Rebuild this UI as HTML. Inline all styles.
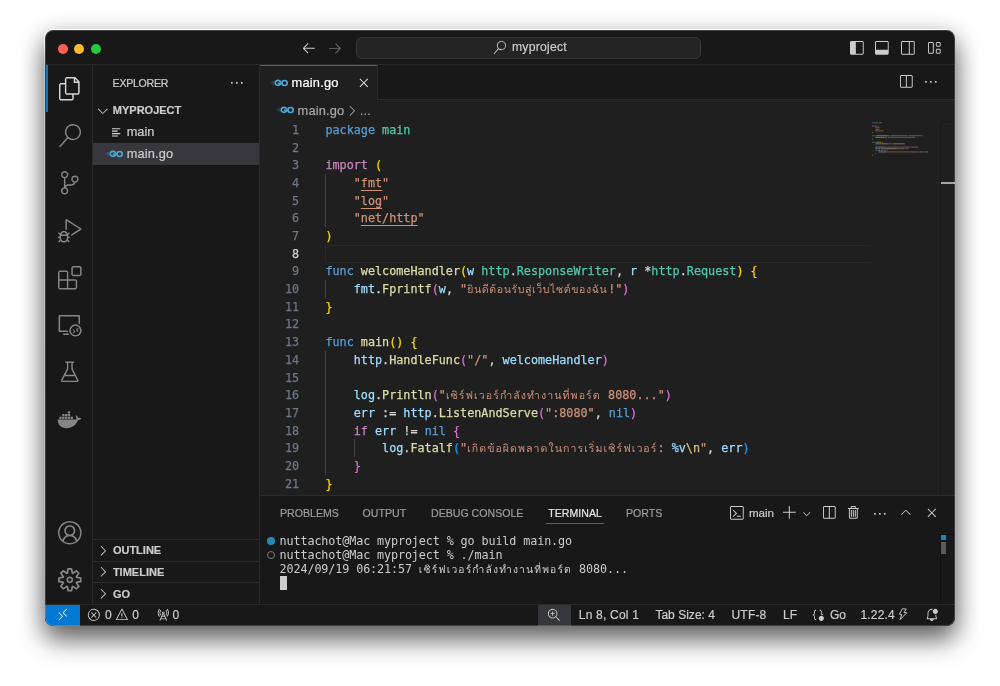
<!DOCTYPE html>
<html lang="th"><head><meta charset="utf-8"><title>main.go — myproject</title>
<style>
html,body{margin:0;padding:0;background:#fff;}
body{width:1000px;height:686px;position:relative;overflow:hidden;font-family:"Liberation Sans","Noto Sans Thai",sans-serif;}
.abs,.ic,.t{position:absolute;}
.ic{display:block;overflow:visible}
.t{white-space:pre;line-height:20px;height:20px;-webkit-text-stroke:.2px}
.m{font-family:"DejaVu Sans Mono","Liberation Mono","Loma","Noto Sans Thai Looped",monospace;}
#win{left:45px;top:30.2px;width:909.7px;height:595.4px;background:#181818;border-radius:8.5px;
 box-shadow:0 14px 26px rgba(0,0,0,.55),0 4px 24px rgba(0,0,0,.22);}
#inner{left:45.5px;top:30.2px;width:909px;height:595.4px;border-radius:8.5px;overflow:hidden;}
.ln{position:absolute;left:0;width:39px;text-align:right;color:#6e7681;}
.code{position:absolute;left:0;top:0;}
.row{position:absolute;left:0;height:17.68px;line-height:17.68px;white-space:pre;font-size:11.78px;-webkit-text-stroke:.25px}
.k{color:#569cd6}.c{color:#c586c0}.ty{color:#4ec9b0}.f{color:#dcdcaa}.v{color:#9cdcfe}.s{color:#ce9178}.p{color:#d4d4d4}
.b1{color:#ffd700}.b2{color:#da70d6}.b3{color:#179fff}.e{color:#d7ba7d}.u{text-decoration:underline;text-underline-offset:3px;text-decoration-thickness:1px}
.th{display:inline-block;white-space:nowrap;overflow:visible;vertical-align:baseline;font-family:"Loma","Noto Sans Thai Looped","Liberation Mono",monospace;line-height:1;-webkit-text-stroke:0}
</style></head><body>
<div id="win" class="abs"></div>
<div class="abs" style="left:44.2px;top:29.4px;width:911.3px;height:596.6px;border-radius:9.3px;background:linear-gradient(to bottom,rgba(255,255,255,.95) 0,rgba(215,215,215,.55) 6%,rgba(205,205,205,.5) 80%,rgba(160,160,160,0) 99%)"></div>
<div class="abs" style="left:45px;top:30.2px;width:909.7px;height:595.4px;border-radius:8.5px;background:#181818"></div>
<div id="all" class="abs" style="left:0;top:0;width:1000px;height:686px;will-change:transform">

<div class="abs" style="left:45.5px;top:63.9px;width:909px;height:1px;background:#2b2b2b"></div>
<div class="abs" style="left:58.10px;top:44.00px;width:10px;height:10px;border-radius:50%;background:#ff5f57"></div>
<div class="abs" style="left:74.45px;top:44.00px;width:10px;height:10px;border-radius:50%;background:#febc2e"></div>
<div class="abs" style="left:90.85px;top:44.00px;width:10px;height:10px;border-radius:50%;background:#28c840"></div>
<svg class="ic" style="left:301.05px;top:40.15px;width:15.70px;height:15.70px;" viewBox="0 0 16 16"><path fill="#ccc" d="M6.99 3.09 2.03 8.11V8.8L6.99 13.81L7.73 13.07L3.57 8.96H14.03V7.95H3.57L7.73 3.79Z"/></svg>
<svg class="ic" style="left:326.75px;top:40.15px;width:15.70px;height:15.70px;" viewBox="0 0 16 16"><path fill="#6f6f6f" d="M9.01 13.87 14.03 8.91V8.16L9.01 3.2L8.27 3.89L12.43 8.05H2.03V9.01H12.43L8.27 13.17Z"/></svg>
<div class="abs" style="left:355.5px;top:36.7px;width:345.8px;height:22.1px;box-sizing:border-box;border:1px solid #383838;border-radius:6px;background:#242424"></div>
<svg class="ic" style="left:492.95px;top:40.85px;width:13.30px;height:13.30px;" viewBox="0 0 16 16"><path fill="#ccc" d="M10.19 0Q8.53 0 7.17 0.88Q5.81 1.76 5.15 3.25Q4.48 4.75 4.72 6.35Q4.96 7.95 6.03 9.12L0.69 15.25L1.44 15.89L6.77 9.81Q8.21 10.93 10 10.99Q11.79 11.04 13.28 10.03Q14.77 9.01 15.36 7.31Q15.95 5.6 15.41 3.87Q14.88 2.13 13.41 1.07Q11.95 0 10.19 0ZM10.19 9.97Q8.96 9.97 7.92 9.39Q6.88 8.8 6.27 7.76Q5.65 6.72 5.65 5.49Q5.65 4.27 6.27 3.23Q6.88 2.19 7.92 1.6Q8.96 1.01 10.19 1.01Q11.41 1.01 12.43 1.6Q13.44 2.19 14.05 3.23Q14.67 4.27 14.67 5.49Q14.67 6.72 14.05 7.76Q13.44 8.8 12.43 9.41Q11.41 10.03 10.19 10.03Z"/></svg>
<div class="t" style="left:511.90px;top:37.37px;font-size:12.2px;color:#ccc;letter-spacing:0.25px;">myproject</div>
<svg class="ic" style="left:848.95px;top:39.85px;width:15.70px;height:15.70px;" viewBox="0 0 16 16"><path fill="#ccc" d="M2.03 1.01 1.01 1.97V13.97L2.03 14.99H14.03L14.99 13.97V1.97L14.03 1.01ZM14.03 13.97H6.99V1.97H14.03Z"/></svg>
<svg class="ic" style="left:874.45px;top:39.85px;width:15.70px;height:15.70px;" viewBox="0 0 16 16"><path fill="#ccc" d="M2.03 1.01 1.01 1.97V13.97L2.03 14.99H14.03L14.99 13.97V1.97L14.03 1.01ZM2.03 9.97V1.97H14.03V9.97Z"/></svg>
<svg class="ic" style="left:899.95px;top:39.85px;width:15.70px;height:15.70px;" viewBox="0 0 16 16"><path fill="#ccc" d="M2.03 1.01 1.01 2.03V14.03L2.03 14.99H14.03L14.99 14.03V2.03L14.03 1.01ZM2.03 14.03V2.03H9.01V14.03ZM10.03 14.03V2.03H14.03V14.03Z"/></svg>
<svg class="ic" style="left:925.90px;top:39.85px;width:15.70px;height:15.70px;" viewBox="0 0 16 16"><path fill="#ccc" d="M2.99 1.97 2.03 2.99V13.01L2.99 13.97H6.99L8 13.01V2.99L6.99 1.97ZM2.99 13.01V2.99H6.99V13.01ZM10.03 2.99 10.99 1.97H14.03L14.99 2.99V5.97L14.03 6.99H10.99L10.03 5.97ZM10.99 2.99V5.97H14.03V2.99ZM10.03 9.97 10.99 9.01H14.03L14.99 9.97V13.01L14.03 13.97H10.99L10.03 13.01ZM10.99 9.97V13.01H14.03V9.97Z"/></svg>
<div class="abs" style="left:92px;top:64.7px;width:1px;height:539.8px;background:#2b2b2b"></div>
<div class="abs" style="left:45.5px;top:65.4px;width:2px;height:47.1px;background:#0078d4"></div>
<svg class="ic" style="left:57.70px;top:77.20px;width:23.60px;height:23.60px;" viewBox="0 0 16 16"><path fill="#d7d7d7" d="M11.68 0H5.65L4.69 1.01V4H1.65L0.69 5.01V15.04L1.65 16H9.71L10.67 15.04V12H13.81L14.67 11.04V2.99ZM11.68 1.39 13.28 2.99H11.68ZM9.65 14.99H1.65V5.01H4.69V11.04L5.65 12H9.65ZM13.65 10.99H5.65V1.01H10.67V4H13.65Z"/></svg>
<svg class="ic" style="left:57.70px;top:124.33px;width:23.60px;height:23.60px;" viewBox="0 0 16 16"><path fill="#868686" d="M10.19 0Q8.53 0 7.17 0.88Q5.81 1.76 5.15 3.25Q4.48 4.75 4.72 6.35Q4.96 7.95 6.03 9.12L0.69 15.25L1.44 15.89L6.77 9.81Q8.21 10.93 10 10.99Q11.79 11.04 13.28 10.03Q14.77 9.01 15.36 7.31Q15.95 5.6 15.41 3.87Q14.88 2.13 13.41 1.07Q11.95 0 10.19 0ZM10.19 9.97Q8.96 9.97 7.92 9.39Q6.88 8.8 6.27 7.76Q5.65 6.72 5.65 5.49Q5.65 4.27 6.27 3.23Q6.88 2.19 7.92 1.6Q8.96 1.01 10.19 1.01Q11.41 1.01 12.43 1.6Q13.44 2.19 14.05 3.23Q14.67 4.27 14.67 5.49Q14.67 6.72 14.05 7.76Q13.44 8.8 12.43 9.41Q11.41 10.03 10.19 10.03Z"/></svg>
<svg class="ic" style="left:57.70px;top:171.46px;width:23.60px;height:23.60px;" viewBox="0 0 16 16"><path fill="#868686" d="M14.03 5.49Q14.03 4.8 13.65 4.19Q13.28 3.57 12.64 3.25Q12 2.93 11.31 2.99Q10.61 3.04 10.03 3.47Q9.44 3.89 9.2 4.56Q8.96 5.23 9.07 5.92Q9.17 6.61 9.65 7.12Q10.13 7.63 10.83 7.84Q10.56 8.37 10.08 8.67Q9.6 8.96 9.01 8.96H7.04Q5.87 8.96 5.01 9.76V4.91Q5.97 4.75 6.53 3.97Q7.09 3.2 7.01 2.24Q6.93 1.28 6.21 0.64Q5.49 0 4.53 0Q3.57 0 2.85 0.64Q2.13 1.28 2.05 2.24Q1.97 3.2 2.53 3.97Q3.09 4.75 4.05 4.91V10.99Q3.09 11.2 2.51 11.95Q1.92 12.69 2 13.65Q2.08 14.61 2.75 15.28Q3.41 15.95 4.37 16Q5.33 16.05 6.08 15.47Q6.83 14.88 6.99 13.92Q7.15 12.96 6.67 12.16Q6.19 11.36 5.23 11.09Q5.49 10.56 5.97 10.27Q6.45 9.97 7.04 9.97H9.01Q9.97 9.97 10.75 9.41Q11.52 8.85 11.84 7.95Q12.75 7.84 13.39 7.12Q14.03 6.4 14.03 5.49ZM3.04 2.51Q3.04 1.87 3.47 1.44Q3.89 1.01 4.53 1.01Q5.17 1.01 5.6 1.44Q6.03 1.87 6.03 2.48Q6.03 3.09 5.6 3.55Q5.17 4 4.53 4Q3.89 4 3.47 3.55Q3.04 3.09 3.04 2.51ZM6.03 13.44Q6.03 14.08 5.6 14.51Q5.17 14.93 4.53 14.93Q3.89 14.93 3.47 14.51Q3.04 14.08 3.04 13.47Q3.04 12.85 3.47 12.4Q3.89 11.95 4.53 11.95Q5.17 11.95 5.6 12.4Q6.03 12.85 6.03 13.44ZM11.52 6.99Q10.88 6.99 10.45 6.53Q10.03 6.08 10.03 5.47Q10.03 4.85 10.45 4.43Q10.88 4 11.49 4Q12.11 4 12.56 4.43Q13.01 4.85 13.01 5.47Q13.01 6.08 12.56 6.53Q12.11 6.99 11.52 6.99Z"/></svg>
<svg class="ic" style="left:57.70px;top:218.59px;width:23.60px;height:23.60px;" viewBox="0 0 16 16"><path fill="#868686" d="M7.31 9.01 6.4 9.87Q6.19 9.07 5.52 8.53Q4.85 8 4 8Q3.15 8 2.48 8.53Q1.81 9.07 1.6 9.87L0.69 9.01L0 9.71L1.17 10.83L1.01 10.99V12H0V13.01H1.01V13.07Q1.07 13.55 1.28 14.03L0 15.31L0.69 16L1.81 14.88Q2.19 15.41 2.77 15.71Q3.36 16 4 16Q4.64 16 5.23 15.71Q5.81 15.41 6.19 14.88L7.31 16L8 15.31L6.72 13.97Q6.93 13.55 6.99 13.01V12.96H8V12H6.99V10.99L6.88 10.83L8 9.71ZM4 9.01Q4.64 9.01 5.07 9.44Q5.49 9.87 5.49 10.51H2.51Q2.51 9.87 2.93 9.44Q3.36 9.01 4 9.01ZM6.03 13.01Q5.92 13.81 5.36 14.37Q4.8 14.93 4 14.99Q3.2 14.93 2.64 14.37Q2.08 13.81 2.03 13.01V11.52H6.03ZM15.84 6.4V7.25L9.01 11.57V10.4L14.67 6.83L6.03 1.33V7.63Q5.55 7.31 5.01 7.15V0.43L5.76 0Z"/></svg>
<svg class="ic" style="left:57.70px;top:265.72px;width:23.60px;height:23.60px;" viewBox="0 0 16 16"><path fill="#868686" d="M9.01 1.01 10.03 0H14.99L16 1.01V5.97L14.99 6.99H10.03L9.01 5.97ZM10.03 1.01V5.97H14.99V1.01ZM0 9.97V4L1.01 2.99H6.03L6.99 4V9.01H12L13.01 9.97V14.99L12 16H1.01L0 14.99ZM6.03 9.01V4H1.01V9.01ZM6.03 9.97H1.01V14.99H6.03ZM6.99 14.99H12V9.97H6.99Z"/></svg>
<svg class="ic" style="left:57.70px;top:312.85px;width:23.60px;height:23.60px;" viewBox="0 0 16 16"><path fill="#868686" d="M0.91 1.44H14.45L14.93 1.92V7.68Q14.45 7.31 13.92 7.04V2.45H1.44V11.84H6.61Q6.61 13.55 7.68 14.93H3.52V13.92H6.61V12.85H0.91L0.37 12.37V1.92ZM11.84 7.68Q10.72 7.68 9.76 8.24Q8.8 8.8 8.24 9.76Q7.68 10.72 7.68 11.84Q7.68 12.96 8.24 13.92Q8.8 14.88 9.76 15.44Q10.72 16 11.84 16Q12.96 16 13.92 15.44Q14.88 14.88 15.44 13.92Q16 12.96 16 11.84Q16 10.72 15.44 9.76Q14.88 8.8 13.92 8.24Q12.96 7.68 11.84 7.68ZM11.84 14.93Q10.99 14.93 10.27 14.53Q9.55 14.13 9.12 13.41Q8.69 12.69 8.69 11.84Q8.69 10.99 9.12 10.27Q9.55 9.55 10.27 9.12Q10.99 8.69 11.84 8.69Q12.69 8.69 13.41 9.12Q14.13 9.55 14.53 10.27Q14.93 10.99 14.93 11.84Q14.93 12.69 14.53 13.41Q14.13 14.13 13.41 14.53Q12.69 14.93 11.84 14.93ZM13.55 12.85 12.16 11.41 13.55 9.97 14.03 10.45 13.01 11.41 14.03 12.43ZM10.03 11.52 10.99 12.48 10.03 13.49 10.45 13.92 11.89 12.48 10.45 11.04Z"/></svg>
<svg class="ic" style="left:57.70px;top:359.98px;width:23.60px;height:23.60px;" viewBox="0 0 16 16"><path fill="#868686" d="M13.87 13.55 10.03 6.03V2.03H10.99V1.01H5.01V1.97H6.03V5.97L2.08 13.55Q1.87 14.08 2.16 14.53Q2.45 14.99 2.99 14.99H13.01Q13.55 14.99 13.84 14.53Q14.13 14.08 13.87 13.55ZM6.88 6.4 6.99 6.19V2.03H9.01V6.24L10.93 10.03H5.07ZM2.99 14.03 4.53 10.99H11.47L13.01 14.03Z"/></svg>
<svg class="ic" style="left:57px;top:410.5px;width:25px;height:18.5px" viewBox="0 0 25 18.5"><g fill="#868686">
<path d="M0.6 8.6H19.2C19.6 7.2 19.3 5.9 18.6 4.9L19.3 4.2C20.3 4.9 20.9 5.9 21 6.9C22 6.6 23.2 6.7 24.3 7.3C23.7 8.6 22.4 9.3 20.9 9.3C19.3 13.7 15.6 17.2 9.3 17.2C4.2 17.2 0.9 14.2 0.6 8.6Z"/>
<rect x="2.4" y="5.7" width="2.3" height="2.2"/><rect x="5.2" y="5.7" width="2.3" height="2.2"/><rect x="8" y="5.7" width="2.3" height="2.2"/><rect x="10.8" y="5.7" width="2.3" height="2.2"/><rect x="13.6" y="5.7" width="2.3" height="2.2"/>
<rect x="5.2" y="3" width="2.3" height="2.2"/><rect x="8" y="3" width="2.3" height="2.2"/><rect x="10.8" y="3" width="2.3" height="2.2"/>
<rect x="10.8" y="0.3" width="2.3" height="2.2"/></g></svg>
<svg class="ic" style="left:57.60px;top:521.20px;width:23.60px;height:23.60px;" viewBox="0 0 16 16"><path fill="#868686" d="M16 8Q16 5.81 14.93 3.97Q13.87 2.13 12.03 1.07Q10.19 0 8 0Q5.81 0 3.97 1.07Q2.13 2.13 1.07 3.97Q0 5.81 0 8Q0 9.76 0.75 11.36Q1.49 12.96 2.83 14.08L3.52 14.61Q5.55 16 8 16Q10.45 16 12.48 14.61L13.23 14.08Q14.51 12.96 15.25 11.36Q16 9.76 16 8ZM8 14.99Q5.81 14.99 4 13.71L4.05 13.33Q4.21 12.8 4.48 12.35Q4.75 11.89 5.12 11.52Q5.49 11.15 5.92 10.88Q6.35 10.61 6.91 10.48Q7.47 10.35 8 10.35Q8.8 10.35 9.57 10.64Q10.35 10.93 10.91 11.49Q11.47 12.05 11.79 12.8Q11.95 13.23 12.05 13.71Q10.24 14.99 8 14.99ZM5.55 7.57Q5.33 7.09 5.33 6.56Q5.33 6.03 5.55 5.55Q5.76 5.07 6.11 4.72Q6.45 4.37 6.93 4.13Q7.41 3.89 8 3.89Q8.59 3.89 9.04 4.11Q9.49 4.32 9.87 4.69Q10.24 5.07 10.45 5.55Q10.67 6.03 10.67 6.59Q10.67 7.15 10.45 7.6Q10.24 8.05 9.87 8.43Q9.49 8.8 9.01 9.01Q8 9.44 6.93 9.01Q6.51 8.8 6.13 8.43Q5.76 8.05 5.55 7.57ZM12.96 12.91Q12.96 12.91 12.96 12.85V12.8Q12.75 12.05 12.29 11.41Q11.84 10.77 11.2 10.29Q10.72 9.92 10.13 9.65Q10.4 9.49 10.61 9.28Q10.99 8.91 11.25 8.48Q11.79 7.63 11.73 6.56Q11.79 5.81 11.49 5.12Q11.2 4.43 10.67 3.89Q10.13 3.36 9.44 3.09Q8.75 2.83 7.97 2.83Q7.2 2.83 6.51 3.09Q5.81 3.36 5.31 3.89Q4.8 4.43 4.51 5.12Q4.21 5.81 4.21 6.56Q4.21 7.09 4.37 7.6Q4.53 8.11 4.75 8.48Q4.96 8.85 5.39 9.28Q5.6 9.49 5.87 9.71Q5.33 9.92 4.85 10.29Q4.21 10.77 3.76 11.41Q3.31 12.05 3.04 12.85V12.91Q2.08 11.95 1.55 10.67Q1.01 9.39 1.01 8Q1.01 6.08 1.95 4.48Q2.88 2.88 4.48 1.95Q6.08 1.01 8 1.01Q9.92 1.01 11.52 1.95Q13.12 2.88 14.05 4.48Q14.99 6.08 14.99 8Q14.99 9.39 14.48 10.67Q13.97 11.95 12.96 12.91Z"/></svg>
<svg class="ic" style="left:57.60px;top:567.80px;width:23.60px;height:23.60px;" viewBox="0 0 16 16"><path fill="#868686" d="M13.23 5.81 16 6.4V9.6L13.23 10.19L14.83 12.53L12.53 14.77L10.19 13.23L9.6 16H6.4L5.81 13.23L3.47 14.83L1.23 12.53L2.77 10.19L0 9.6V6.4L2.77 5.81L1.23 3.47L3.47 1.17L5.81 2.77L6.4 0H9.6L10.19 2.77L12.53 1.17L14.83 3.47ZM12.21 9.23 14.88 8.69V7.36L12.21 6.77L11.84 5.92L13.33 3.63L12.43 2.67L10.13 4.21L9.23 3.84L8.69 1.17H7.36L6.83 3.84L5.97 4.21L3.68 2.67L2.72 3.63L4.27 5.92L3.89 6.77L1.23 7.36V8.69L3.89 9.23L4.27 10.08L2.72 12.37L3.68 13.33L5.97 11.79L6.83 12.16L7.36 14.83H8.69L9.23 12.16L10.13 11.79L12.43 13.33L13.33 12.37L11.84 10.08ZM6.72 6.08Q7.31 5.71 8 5.71Q8.96 5.71 9.63 6.37Q10.29 7.04 10.29 8Q10.29 8.8 9.76 9.44Q9.23 10.08 8.43 10.24Q7.63 10.4 6.91 10.03Q6.19 9.65 5.89 8.88Q5.6 8.11 5.81 7.33Q6.03 6.56 6.72 6.08ZM7.36 8.96Q7.68 9.12 8 9.12Q8.48 9.12 8.8 8.8Q9.12 8.48 9.12 8.03Q9.12 7.57 8.88 7.28Q8.64 6.99 8.24 6.91Q7.84 6.83 7.47 7.01Q7.09 7.2 6.93 7.57Q6.77 7.95 6.91 8.35Q7.04 8.75 7.36 8.96Z"/></svg>
<div class="abs" style="left:259px;top:64.7px;width:1px;height:539.8px;background:#2b2b2b"></div>
<div class="t" style="left:112.60px;top:73.33px;font-size:10.6px;color:#ccc;letter-spacing:-0.27px;">EXPLORER</div>
<svg class="ic" style="left:228.65px;top:74.75px;width:15.70px;height:15.70px;" viewBox="0 0 16 16"><path fill="#ccc" d="M4 8Q4 8.43 3.71 8.72Q3.41 9.01 2.99 9.01Q2.56 9.01 2.29 8.72Q2.03 8.43 2.03 8Q2.03 7.57 2.29 7.28Q2.56 6.99 2.99 6.99Q3.41 6.99 3.71 7.28Q4 7.57 4 8ZM9.01 8Q9.01 8.43 8.72 8.72Q8.43 9.01 8 9.01Q7.57 9.01 7.28 8.72Q6.99 8.43 6.99 8Q6.99 7.57 7.28 7.28Q7.57 6.99 8 6.99Q8.43 6.99 8.72 7.28Q9.01 7.57 9.01 8ZM14.03 8Q14.03 8.43 13.73 8.72Q13.44 9.01 13.01 9.01Q12.59 9.01 12.29 8.72Q12 8.43 12 8Q12 7.57 12.29 7.28Q12.59 6.99 13.01 6.99Q13.44 6.99 13.73 7.28Q14.03 7.57 14.03 8Z"/></svg>
<svg class="ic" style="left:95.05px;top:102.85px;width:15.70px;height:15.70px;" viewBox="0 0 16 16"><path fill="#ccc" d="M8 10.08 12.32 5.71 12.96 6.35 8.27 10.99H7.68L2.99 6.35L3.63 5.71Z"/></svg>
<div class="t" style="left:112.80px;top:100.49px;font-size:11px;color:#ccc;font-weight:700;">MYPROJECT</div>
<svg class="ic" style="left:112px;top:127.8px;width:9px;height:9px" viewBox="0 0 9 9"><g stroke="#d4d7d6" stroke-width="1.15"><path d="M0 0.7H8.3M0 3.15H5.6M0 5.6H8.3M0 8H6"/></g></svg>
<div class="t" style="left:126.70px;top:122.06px;font-size:12.8px;color:#ccc;">main</div>
<div class="abs" style="left:92.9px;top:143.2px;width:166.2px;height:21.6px;background:#37373d"></div>
<svg class="ic" style="left:104.90px;top:150.30px;width:18px;height:8px" viewBox="0 0 18 8"><g fill="none" stroke="#4fa9d6" stroke-width="1.6" stroke-linecap="round"><path d="M10.35 2.55A2.75 2.5 0 1 0 10.7 4.3H8.4"/><ellipse cx="14.55" cy="4" rx="2.65" ry="2.5"/></g><g stroke="#4fa9d6" stroke-width="0.5" stroke-linecap="round" opacity=".6"><path d="M2.2 2.8H4.4M0.8 3.9H4M2.6 5H4.2"/></g></svg>
<div class="t" style="left:126.70px;top:143.66px;font-size:12.8px;color:#ccc;letter-spacing:0.17px;">main.go</div>
<div class="abs" style="left:93px;top:539.30px;width:166px;height:1px;background:#2b2b2b"></div>
<svg class="ic" style="left:94.85px;top:542.65px;width:15.70px;height:15.70px;" viewBox="0 0 16 16"><path fill="#ccc" d="M10.08 8 5.71 3.68 6.35 3.04 10.99 7.73V8.32L6.35 13.01L5.71 12.37Z"/></svg>
<div class="t" style="left:112.90px;top:540.49px;font-size:11px;color:#ccc;font-weight:700;">OUTLINE</div>
<div class="abs" style="left:93px;top:560.85px;width:166px;height:1px;background:#2b2b2b"></div>
<svg class="ic" style="left:94.85px;top:564.20px;width:15.70px;height:15.70px;" viewBox="0 0 16 16"><path fill="#ccc" d="M10.08 8 5.71 3.68 6.35 3.04 10.99 7.73V8.32L6.35 13.01L5.71 12.37Z"/></svg>
<div class="t" style="left:112.90px;top:562.04px;font-size:11px;color:#ccc;font-weight:700;">TIMELINE</div>
<div class="abs" style="left:93px;top:582.40px;width:166px;height:1px;background:#2b2b2b"></div>
<svg class="ic" style="left:94.85px;top:585.75px;width:15.70px;height:15.70px;" viewBox="0 0 16 16"><path fill="#ccc" d="M10.08 8 5.71 3.68 6.35 3.04 10.99 7.73V8.32L6.35 13.01L5.71 12.37Z"/></svg>
<div class="t" style="left:112.90px;top:583.59px;font-size:11px;color:#ccc;font-weight:700;">GO</div>
<div class="abs" style="left:260px;top:64.7px;width:694.5px;height:431px;background:#1f1f1f"></div>
<div class="abs" style="left:260px;top:64.7px;width:694.5px;height:34.4px;background:#181818"></div>
<div class="abs" style="left:260px;top:98.6px;width:694.5px;height:1px;background:#2b2b2b"></div>
<div class="abs" style="left:260px;top:64.7px;width:117px;height:35px;background:#1f1f1f"></div>
<div class="abs" style="left:260px;top:64.6px;width:117px;height:1px;background:#0078d4"></div>
<div class="abs" style="left:377px;top:64.7px;width:1px;height:34.4px;background:#2b2b2b"></div>
<svg class="ic" style="left:270.30px;top:78.80px;width:18px;height:8px" viewBox="0 0 18 8"><g fill="none" stroke="#4fa9d6" stroke-width="1.6" stroke-linecap="round"><path d="M10.35 2.55A2.75 2.5 0 1 0 10.7 4.3H8.4"/><ellipse cx="14.55" cy="4" rx="2.65" ry="2.5"/></g><g stroke="#4fa9d6" stroke-width="0.5" stroke-linecap="round" opacity=".6"><path d="M2.2 2.8H4.4M0.8 3.9H4M2.6 5H4.2"/></g></svg>
<div class="t" style="left:291.60px;top:72.56px;font-size:12.8px;color:#fff;letter-spacing:0.2px;">main.go</div>
<svg class="ic" style="left:355.85px;top:75.15px;width:15.70px;height:15.70px;" viewBox="0 0 16 16"><path fill="#ddd" d="M8 8.69 11.63 12.37 12.37 11.63 8.69 8 12.37 4.37 11.63 3.63 8 7.31 4.37 3.63 3.63 4.37 7.31 8 3.63 11.63 4.37 12.37Z"/></svg>
<svg class="ic" style="left:898.45px;top:74.05px;width:15.70px;height:15.70px;" viewBox="0 0 16 16"><path fill="#ccc" d="M14.03 1.01H2.99L2.03 1.97V13.01L2.99 13.97H14.03L14.99 13.01V1.97ZM8 13.01H2.99V1.97H8ZM14.03 13.01H9.01V1.97H14.03Z"/></svg>
<svg class="ic" style="left:923.45px;top:74.45px;width:15.70px;height:15.70px;" viewBox="0 0 16 16"><path fill="#ccc" d="M4 8Q4 8.43 3.71 8.72Q3.41 9.01 2.99 9.01Q2.56 9.01 2.29 8.72Q2.03 8.43 2.03 8Q2.03 7.57 2.29 7.28Q2.56 6.99 2.99 6.99Q3.41 6.99 3.71 7.28Q4 7.57 4 8ZM9.01 8Q9.01 8.43 8.72 8.72Q8.43 9.01 8 9.01Q7.57 9.01 7.28 8.72Q6.99 8.43 6.99 8Q6.99 7.57 7.28 7.28Q7.57 6.99 8 6.99Q8.43 6.99 8.72 7.28Q9.01 7.57 9.01 8ZM14.03 8Q14.03 8.43 13.73 8.72Q13.44 9.01 13.01 9.01Q12.59 9.01 12.29 8.72Q12 8.43 12 8Q12 7.57 12.29 7.28Q12.59 6.99 13.01 6.99Q13.44 6.99 13.73 7.28Q14.03 7.57 14.03 8Z"/></svg>
<svg class="ic" style="left:276.10px;top:106.40px;width:18px;height:8px" viewBox="0 0 18 8"><g fill="none" stroke="#4fa9d6" stroke-width="1.6" stroke-linecap="round"><path d="M10.35 2.55A2.75 2.5 0 1 0 10.7 4.3H8.4"/><ellipse cx="14.55" cy="4" rx="2.65" ry="2.5"/></g><g stroke="#4fa9d6" stroke-width="0.5" stroke-linecap="round" opacity=".6"><path d="M2.2 2.8H4.4M0.8 3.9H4M2.6 5H4.2"/></g></svg>
<div class="t" style="left:297.60px;top:100.66px;font-size:12.8px;color:#a9a9a9;letter-spacing:0.15px;">main.go</div>
<svg class="ic" style="left:344.45px;top:102.55px;width:15.70px;height:15.70px;" viewBox="0 0 16 16"><path fill="#a9a9a9" d="M10.08 8 5.71 3.68 6.35 3.04 10.99 7.73V8.32L6.35 13.01L5.71 12.37Z"/></svg>
<div class="t" style="left:359.60px;top:101.18px;font-size:11.6px;color:#a9a9a9;">…</div>
<div class="abs m" style="left:260px;top:121.2px;width:612px;height:374px;overflow:hidden">
<div class="abs" style="left:65.40px;top:123.76px;width:546px;height:17.68px;box-sizing:border-box;border:1.6px solid #292929;border-right:0"></div>
<div class="abs" style="left:65.40px;top:53.04px;width:1px;height:53.04px;background:#404040"></div>
<div class="abs" style="left:65.40px;top:159.12px;width:1px;height:17.68px;background:#404040"></div>
<div class="abs" style="left:65.40px;top:229.84px;width:1px;height:123.76px;background:#404040"></div>
<div class="abs" style="left:93.76px;top:318.24px;width:1px;height:17.68px;background:#404040"></div>
<div class="row" style="top:0.80px;left:0;width:39.2px;text-align:right;color:#6e7681"><span>1</span></div>
<div class="row" style="top:0.80px;left:65.40px"><span><span class="k">package</span> <span class="ty">main</span></span></div>
<div class="row" style="top:18.48px;left:0;width:39.2px;text-align:right;color:#6e7681"><span>2</span></div>
<div class="row" style="top:36.16px;left:0;width:39.2px;text-align:right;color:#6e7681"><span>3</span></div>
<div class="row" style="top:36.16px;left:65.40px"><span><span class="c">import</span> <span class="b1">(</span></span></div>
<div class="row" style="top:53.84px;left:0;width:39.2px;text-align:right;color:#6e7681"><span>4</span></div>
<div class="row" style="top:53.84px;left:65.40px"><span>    <span class="s">"<span class="u">fmt</span>"</span></span></div>
<div class="row" style="top:71.52px;left:0;width:39.2px;text-align:right;color:#6e7681"><span>5</span></div>
<div class="row" style="top:71.52px;left:65.40px"><span>    <span class="s">"<span class="u">log</span>"</span></span></div>
<div class="row" style="top:89.20px;left:0;width:39.2px;text-align:right;color:#6e7681"><span>6</span></div>
<div class="row" style="top:89.20px;left:65.40px"><span>    <span class="s">"<span class="u">net/http</span>"</span></span></div>
<div class="row" style="top:106.88px;left:0;width:39.2px;text-align:right;color:#6e7681"><span>7</span></div>
<div class="row" style="top:106.88px;left:65.40px"><span><span class="b1">)</span></span></div>
<div class="row" style="top:124.56px;left:0;width:39.2px;text-align:right;color:#ccc"><span>8</span></div>
<div class="row" style="top:142.24px;left:0;width:39.2px;text-align:right;color:#6e7681"><span>9</span></div>
<div class="row" style="top:142.24px;left:65.40px"><span><span class="k">func</span> <span class="f">welcomeHandler</span><span class="b1">(</span><span class="v">w</span> <span class="ty">http</span><span class="p">.</span><span class="ty">ResponseWriter</span><span class="p">,</span> <span class="v">r</span> <span class="p">*</span><span class="ty">http</span><span class="p">.</span><span class="ty">Request</span><span class="b1">)</span> <span class="b1">{</span></span></div>
<div class="row" style="top:159.92px;left:0;width:39.2px;text-align:right;color:#6e7681"><span>10</span></div>
<div class="row" style="top:159.92px;left:65.40px"><span>    <span class="v">fmt</span><span class="p">.</span><span class="f">Fprintf</span><span class="b2">(</span><span class="v">w</span><span class="p">,</span> <span class="s">"<span class="th" style="width:141.00px;font-size:10.6px;letter-spacing:0.58px">ยินดีต้อนรับสู่เว็บไซต์ของฉัน</span>!"</span><span class="b2">)</span></span></div>
<div class="row" style="top:177.60px;left:0;width:39.2px;text-align:right;color:#6e7681"><span>11</span></div>
<div class="row" style="top:177.60px;left:65.40px"><span><span class="b1">}</span></span></div>
<div class="row" style="top:195.28px;left:0;width:39.2px;text-align:right;color:#6e7681"><span>12</span></div>
<div class="row" style="top:212.96px;left:0;width:39.2px;text-align:right;color:#6e7681"><span>13</span></div>
<div class="row" style="top:212.96px;left:65.40px"><span><span class="k">func</span> <span class="f">main</span><span class="b1">()</span> <span class="b1">{</span></span></div>
<div class="row" style="top:230.64px;left:0;width:39.2px;text-align:right;color:#6e7681"><span>14</span></div>
<div class="row" style="top:230.64px;left:65.40px"><span>    <span class="v">http</span><span class="p">.</span><span class="f">HandleFunc</span><span class="b2">(</span><span class="s">"/"</span><span class="p">,</span> <span class="v">welcomeHandler</span><span class="b2">)</span></span></div>
<div class="row" style="top:248.32px;left:0;width:39.2px;text-align:right;color:#6e7681"><span>15</span></div>
<div class="row" style="top:266.00px;left:0;width:39.2px;text-align:right;color:#6e7681"><span>16</span></div>
<div class="row" style="top:266.00px;left:65.40px"><span>    <span class="v">log</span><span class="p">.</span><span class="f">Println</span><span class="b2">(</span><span class="s">"<span class="th" style="width:155.10px;font-size:10.6px;letter-spacing:1.05px">เซิร์ฟเวอร์กำลังทำงานที่พอร์ต</span> 8080..."</span><span class="b2">)</span></span></div>
<div class="row" style="top:283.68px;left:0;width:39.2px;text-align:right;color:#6e7681"><span>17</span></div>
<div class="row" style="top:283.68px;left:65.40px"><span>    <span class="v">err</span> <span class="p">:=</span> <span class="v">http</span><span class="p">.</span><span class="f">ListenAndServe</span><span class="b2">(</span><span class="s">":8080"</span><span class="p">,</span> <span class="k">nil</span><span class="b2">)</span></span></div>
<div class="row" style="top:301.36px;left:0;width:39.2px;text-align:right;color:#6e7681"><span>18</span></div>
<div class="row" style="top:301.36px;left:65.40px"><span>    <span class="c">if</span> <span class="v">err</span> <span class="p">!=</span> <span class="k">nil</span> <span class="b2">{</span></span></div>
<div class="row" style="top:319.04px;left:0;width:39.2px;text-align:right;color:#6e7681"><span>19</span></div>
<div class="row" style="top:319.04px;left:65.40px"><span>        <span class="v">log</span><span class="p">.</span><span class="f">Fatalf</span><span class="b3">(</span><span class="s">"<span class="th" style="width:190.35px;font-size:10.6px;letter-spacing:1.04px">เกิดข้อผิดพลาดในการเริ่มเซิร์ฟเวอร์</span>: </span><span class="v">%v</span><span class="e">\n</span><span class="s">"</span><span class="p">,</span> <span class="v">err</span><span class="b3">)</span></span></div>
<div class="row" style="top:336.72px;left:0;width:39.2px;text-align:right;color:#6e7681"><span>20</span></div>
<div class="row" style="top:336.72px;left:65.40px"><span>    <span class="b2">}</span></span></div>
<div class="row" style="top:354.40px;left:0;width:39.2px;text-align:right;color:#6e7681"><span>21</span></div>
<div class="row" style="top:354.40px;left:65.40px"><span><span class="b1">}</span></span></div>
</div>
<svg class="ic" style="left:872.4px;top:121.5px;width:62px;height:36px" viewBox="0 0 62 36"><rect x="0.00" y="0.30" width="5.81" height="0.95" fill="#569cd6" opacity=".5"/><rect x="6.64" y="0.30" width="3.32" height="0.95" fill="#4ec9b0" opacity=".5"/><rect x="0.00" y="3.54" width="4.98" height="0.95" fill="#c586c0" opacity=".5"/><rect x="5.81" y="3.54" width="0.83" height="0.95" fill="#ffd700" opacity=".5"/><rect x="3.32" y="5.16" width="4.15" height="0.95" fill="#ce9178" opacity=".5"/><rect x="3.32" y="6.78" width="4.15" height="0.95" fill="#ce9178" opacity=".5"/><rect x="3.32" y="8.40" width="8.30" height="0.95" fill="#ce9178" opacity=".5"/><rect x="0.00" y="10.02" width="0.83" height="0.95" fill="#ffd700" opacity=".5"/><rect x="0.00" y="13.26" width="3.32" height="0.95" fill="#569cd6" opacity=".5"/><rect x="4.15" y="13.26" width="11.62" height="0.95" fill="#dcdcaa" opacity=".5"/><rect x="15.77" y="13.26" width="0.83" height="0.95" fill="#ffd700" opacity=".5"/><rect x="16.60" y="13.26" width="0.83" height="0.95" fill="#9cdcfe" opacity=".5"/><rect x="18.26" y="13.26" width="3.32" height="0.95" fill="#4ec9b0" opacity=".5"/><rect x="21.58" y="13.26" width="0.83" height="0.95" fill="#d4d4d4" opacity=".5"/><rect x="22.41" y="13.26" width="11.62" height="0.95" fill="#4ec9b0" opacity=".5"/><rect x="34.03" y="13.26" width="0.83" height="0.95" fill="#d4d4d4" opacity=".5"/><rect x="35.69" y="13.26" width="0.83" height="0.95" fill="#9cdcfe" opacity=".5"/><rect x="37.35" y="13.26" width="0.83" height="0.95" fill="#d4d4d4" opacity=".5"/><rect x="38.18" y="13.26" width="3.32" height="0.95" fill="#4ec9b0" opacity=".5"/><rect x="41.50" y="13.26" width="0.83" height="0.95" fill="#d4d4d4" opacity=".5"/><rect x="42.33" y="13.26" width="5.81" height="0.95" fill="#4ec9b0" opacity=".5"/><rect x="48.14" y="13.26" width="0.83" height="0.95" fill="#ffd700" opacity=".5"/><rect x="49.80" y="13.26" width="0.83" height="0.95" fill="#ffd700" opacity=".5"/><rect x="3.32" y="14.88" width="2.49" height="0.95" fill="#9cdcfe" opacity=".5"/><rect x="5.81" y="14.88" width="0.83" height="0.95" fill="#d4d4d4" opacity=".5"/><rect x="6.64" y="14.88" width="5.81" height="0.95" fill="#dcdcaa" opacity=".5"/><rect x="12.45" y="14.88" width="0.83" height="0.95" fill="#da70d6" opacity=".5"/><rect x="13.28" y="14.88" width="0.83" height="0.95" fill="#9cdcfe" opacity=".5"/><rect x="14.11" y="14.88" width="0.83" height="0.95" fill="#d4d4d4" opacity=".5"/><rect x="15.77" y="14.88" width="26.56" height="0.95" fill="#ce9178" opacity=".5"/><rect x="42.33" y="14.88" width="0.83" height="0.95" fill="#da70d6" opacity=".5"/><rect x="0.00" y="16.50" width="0.83" height="0.95" fill="#ffd700" opacity=".5"/><rect x="0.00" y="19.74" width="3.32" height="0.95" fill="#569cd6" opacity=".5"/><rect x="4.15" y="19.74" width="3.32" height="0.95" fill="#dcdcaa" opacity=".5"/><rect x="7.47" y="19.74" width="1.66" height="0.95" fill="#ffd700" opacity=".5"/><rect x="9.96" y="19.74" width="0.83" height="0.95" fill="#ffd700" opacity=".5"/><rect x="3.32" y="21.36" width="3.32" height="0.95" fill="#9cdcfe" opacity=".5"/><rect x="6.64" y="21.36" width="0.83" height="0.95" fill="#d4d4d4" opacity=".5"/><rect x="7.47" y="21.36" width="8.30" height="0.95" fill="#dcdcaa" opacity=".5"/><rect x="15.77" y="21.36" width="0.83" height="0.95" fill="#da70d6" opacity=".5"/><rect x="16.60" y="21.36" width="2.49" height="0.95" fill="#ce9178" opacity=".5"/><rect x="19.09" y="21.36" width="0.83" height="0.95" fill="#d4d4d4" opacity=".5"/><rect x="20.75" y="21.36" width="11.62" height="0.95" fill="#9cdcfe" opacity=".5"/><rect x="32.37" y="21.36" width="0.83" height="0.95" fill="#da70d6" opacity=".5"/><rect x="3.32" y="24.60" width="2.49" height="0.95" fill="#9cdcfe" opacity=".5"/><rect x="5.81" y="24.60" width="0.83" height="0.95" fill="#d4d4d4" opacity=".5"/><rect x="6.64" y="24.60" width="5.81" height="0.95" fill="#dcdcaa" opacity=".5"/><rect x="12.45" y="24.60" width="0.83" height="0.95" fill="#da70d6" opacity=".5"/><rect x="13.28" y="24.60" width="24.90" height="0.95" fill="#ce9178" opacity=".5"/><rect x="39.01" y="24.60" width="6.64" height="0.95" fill="#ce9178" opacity=".5"/><rect x="45.65" y="24.60" width="0.83" height="0.95" fill="#da70d6" opacity=".5"/><rect x="3.32" y="26.22" width="2.49" height="0.95" fill="#9cdcfe" opacity=".5"/><rect x="6.64" y="26.22" width="1.66" height="0.95" fill="#d4d4d4" opacity=".5"/><rect x="9.13" y="26.22" width="3.32" height="0.95" fill="#9cdcfe" opacity=".5"/><rect x="12.45" y="26.22" width="0.83" height="0.95" fill="#d4d4d4" opacity=".5"/><rect x="13.28" y="26.22" width="11.62" height="0.95" fill="#dcdcaa" opacity=".5"/><rect x="24.90" y="26.22" width="0.83" height="0.95" fill="#da70d6" opacity=".5"/><rect x="25.73" y="26.22" width="5.81" height="0.95" fill="#ce9178" opacity=".5"/><rect x="31.54" y="26.22" width="0.83" height="0.95" fill="#d4d4d4" opacity=".5"/><rect x="33.20" y="26.22" width="2.49" height="0.95" fill="#569cd6" opacity=".5"/><rect x="35.69" y="26.22" width="0.83" height="0.95" fill="#da70d6" opacity=".5"/><rect x="3.32" y="27.84" width="1.66" height="0.95" fill="#c586c0" opacity=".5"/><rect x="5.81" y="27.84" width="2.49" height="0.95" fill="#9cdcfe" opacity=".5"/><rect x="9.13" y="27.84" width="1.66" height="0.95" fill="#d4d4d4" opacity=".5"/><rect x="11.62" y="27.84" width="2.49" height="0.95" fill="#569cd6" opacity=".5"/><rect x="14.94" y="27.84" width="0.83" height="0.95" fill="#da70d6" opacity=".5"/><rect x="6.64" y="29.46" width="2.49" height="0.95" fill="#9cdcfe" opacity=".5"/><rect x="9.13" y="29.46" width="0.83" height="0.95" fill="#d4d4d4" opacity=".5"/><rect x="9.96" y="29.46" width="4.98" height="0.95" fill="#dcdcaa" opacity=".5"/><rect x="14.94" y="29.46" width="0.83" height="0.95" fill="#179fff" opacity=".5"/><rect x="15.77" y="29.46" width="30.71" height="0.95" fill="#ce9178" opacity=".5"/><rect x="47.31" y="29.46" width="1.66" height="0.95" fill="#9cdcfe" opacity=".5"/><rect x="48.97" y="29.46" width="1.66" height="0.95" fill="#d7ba7d" opacity=".5"/><rect x="50.63" y="29.46" width="0.83" height="0.95" fill="#ce9178" opacity=".5"/><rect x="51.46" y="29.46" width="0.83" height="0.95" fill="#d4d4d4" opacity=".5"/><rect x="53.12" y="29.46" width="2.49" height="0.95" fill="#9cdcfe" opacity=".5"/><rect x="55.61" y="29.46" width="0.83" height="0.95" fill="#179fff" opacity=".5"/><rect x="3.32" y="31.08" width="0.83" height="0.95" fill="#da70d6" opacity=".5"/><rect x="0.00" y="32.70" width="0.83" height="0.95" fill="#ffd700" opacity=".5"/></svg>
<div class="abs" style="left:940.2px;top:121.2px;width:14.3px;height:374.3px;box-sizing:border-box;border-left:1px solid #16191c;border-top:1px solid #16191c"></div>
<div class="abs" style="left:941px;top:182.4px;width:13.5px;height:1.8px;background:#a6a6a6"></div>
<div class="abs" style="left:260px;top:495.2px;width:694.5px;height:1px;background:#2b2b2b"></div>
<div class="t" style="left:280.00px;top:502.93px;font-size:10.6px;color:#9d9d9d;">PROBLEMS</div>
<div class="t" style="left:362.60px;top:502.93px;font-size:10.6px;color:#9d9d9d;">OUTPUT</div>
<div class="t" style="left:431.00px;top:502.93px;font-size:10.6px;color:#9d9d9d;">DEBUG CONSOLE</div>
<div class="t" style="left:548.30px;top:502.93px;font-size:10.6px;color:#e7e7e7;">TERMINAL</div>
<div class="t" style="left:626.00px;top:502.93px;font-size:10.6px;color:#9d9d9d;">PORTS</div>
<div class="abs" style="left:546.2px;top:523px;width:57.8px;height:1px;background:#0078d4"></div>
<svg class="ic" style="left:729.15px;top:505.35px;width:15.70px;height:15.70px;" viewBox="0 0 16 16"><path fill="#ccc" d="M1.01 1.97 2.03 1.01H14.03L14.99 1.97V13.97L14.03 14.99H2.03L1.01 13.97ZM2.03 1.97V13.97H14.03V1.97ZM4.69 5.01 4 5.71 6.83 8.53 4 11.36 4.69 12.05 8 8.8V8.27ZM8 10.99H12V12H8Z"/></svg>
<div class="t" style="left:748.90px;top:503.08px;font-size:11.6px;color:#ccc;">main</div>
<svg class="ic" style="left:782.45px;top:505.35px;width:15.70px;height:15.70px;" viewBox="0 0 16 16"><path fill="#ccc" d="M14.03 6.99V8H8V13.97H6.99V8H1.01V6.99H6.99V1.01H8V6.99Z"/></svg>
<svg class="ic" style="left:801.05px;top:507.65px;width:11.50px;height:11.50px;" viewBox="0 0 16 16"><path fill="#ccc" d="M8 10.08 12.32 5.71 12.96 6.35 8.27 10.99H7.68L2.99 6.35L3.63 5.71Z"/></svg>
<svg class="ic" style="left:821.45px;top:505.35px;width:15.70px;height:15.70px;" viewBox="0 0 16 16"><path fill="#ccc" d="M14.03 1.01H2.99L2.03 1.97V13.01L2.99 13.97H14.03L14.99 13.01V1.97ZM8 13.01H2.99V1.97H8ZM14.03 13.01H9.01V1.97H14.03Z"/></svg>
<svg class="ic" style="left:846.45px;top:505.35px;width:15.70px;height:15.70px;" viewBox="0 0 16 16"><path fill="#ccc" d="M10.03 2.99H13.01V4H12V13.01L10.99 13.97H4L2.99 13.01V4H2.03V2.99H5.01V1.97Q5.01 1.6 5.31 1.31Q5.6 1.01 6.03 1.01H9.01Q9.44 1.01 9.73 1.31Q10.03 1.6 10.03 1.97ZM9.01 1.97H6.03V2.99H9.01ZM4 13.01H10.99V4H4ZM6.03 5.01H5.01V12H6.03ZM6.99 5.01H8V12H6.99ZM9.01 5.01H10.03V12H9.01Z"/></svg>
<svg class="ic" style="left:872.35px;top:505.55px;width:15.70px;height:15.70px;" viewBox="0 0 16 16"><path fill="#ccc" d="M4 8Q4 8.43 3.71 8.72Q3.41 9.01 2.99 9.01Q2.56 9.01 2.29 8.72Q2.03 8.43 2.03 8Q2.03 7.57 2.29 7.28Q2.56 6.99 2.99 6.99Q3.41 6.99 3.71 7.28Q4 7.57 4 8ZM9.01 8Q9.01 8.43 8.72 8.72Q8.43 9.01 8 9.01Q7.57 9.01 7.28 8.72Q6.99 8.43 6.99 8Q6.99 7.57 7.28 7.28Q7.57 6.99 8 6.99Q8.43 6.99 8.72 7.28Q9.01 7.57 9.01 8ZM14.03 8Q14.03 8.43 13.73 8.72Q13.44 9.01 13.01 9.01Q12.59 9.01 12.29 8.72Q12 8.43 12 8Q12 7.57 12.29 7.28Q12.59 6.99 13.01 6.99Q13.44 6.99 13.73 7.28Q14.03 7.57 14.03 8Z"/></svg>
<svg class="ic" style="left:898.15px;top:505.35px;width:15.70px;height:15.70px;" viewBox="0 0 16 16"><path fill="#ccc" d="M8 5.92 3.68 10.29 3.04 9.65 7.73 5.01H8.32L13.01 9.65L12.37 10.29Z"/></svg>
<svg class="ic" style="left:923.55px;top:505.35px;width:15.70px;height:15.70px;" viewBox="0 0 16 16"><path fill="#ccc" d="M8 8.69 11.63 12.37 12.37 11.63 8.69 8 12.37 4.37 11.63 3.63 8 7.31 4.37 3.63 3.63 4.37 7.31 8 3.63 11.63 4.37 12.37Z"/></svg>
<div class="abs" style="left:267px;top:537.4px;width:8px;height:8px;border-radius:50%;background:#2489b8"></div>
<div class="abs" style="left:267px;top:551.1px;width:8px;height:8px;box-sizing:border-box;border-radius:50%;border:1.3px solid #7a7a7a"></div>
<div class="abs m" style="left:279.6px;top:534.00px;height:14px;line-height:14px;font-size:11.78px;letter-spacing:-0.122px;color:#ccc;white-space:pre">nuttachot@Mac myproject % go build main.go</div>
<div class="abs m" style="left:279.6px;top:548.00px;height:14px;line-height:14px;font-size:11.78px;letter-spacing:-0.122px;color:#ccc;white-space:pre">nuttachot@Mac myproject % ./main</div>
<div class="abs m" style="left:279.6px;top:562.00px;height:14px;line-height:14px;font-size:11.78px;letter-spacing:-0.122px;color:#ccc;white-space:pre">2024/09/19 06:21:57 <span class="th" style="width:153.34px;font-size:10.3px;letter-spacing:1.15px">เซิร์ฟเวอร์กำลังทำงานที่พอร์ต</span> 8080...</div>
<div class="abs" style="left:279.6px;top:576px;width:7px;height:13.6px;background:#ccc"></div>
<div class="abs" style="left:940.6px;top:534px;width:5.2px;height:6px;background:#1a85c4"></div>
<div class="abs" style="left:940.6px;top:541.6px;width:5.2px;height:12px;background:#5a5a5a"></div>
<div class="abs" style="left:940px;top:533.6px;width:14.7px;height:70.8px;box-sizing:border-box;border-left:1px solid #101010;border-top:1px solid #101010"></div>
<div class="abs" style="left:45.5px;top:604.2px;width:909px;height:1px;background:#2b2b2b"></div>
<div class="abs" style="left:45px;top:604.5px;width:34.6px;height:21.1px;background:#0078d4;border-bottom-left-radius:8.5px"></div>
<svg class="ic" style="left:55.60px;top:608.20px;width:13.60px;height:13.60px;" viewBox="0 0 16 16"><path fill="#fff" d="M12.91 9.55 8.91 5.6 12.91 1.6 12.27 1.01 8 5.28V5.92L12.27 10.19ZM2.99 5.6 7.09 9.71 2.99 13.76 3.63 14.4 8 9.97V9.39L3.63 5.01Z"/></svg>
<svg class="ic" style="left:87.20px;top:608.10px;width:13.80px;height:13.80px;" viewBox="0 0 16 16"><path fill="#ccc" d="M8.59 1.01Q9.76 1.07 10.85 1.6Q11.95 2.13 12.8 2.99Q14.83 5.17 14.83 8.11Q14.83 10.4 13.23 12.48Q12.43 13.44 11.41 14.05Q10.4 14.67 9.23 14.88Q6.67 15.36 4.59 14.19Q3.52 13.6 2.72 12.69Q1.92 11.79 1.49 10.67Q1.07 9.55 0.99 8.32Q0.91 7.09 1.28 5.97Q2.08 3.52 4.11 2.19Q5.07 1.55 6.21 1.23Q7.36 0.91 8.59 1.01ZM9.12 13.92Q11.15 13.44 12.48 11.79Q13.81 9.97 13.71 8Q13.71 6.77 13.25 5.65Q12.8 4.53 12 3.68Q10.45 2.13 8.43 1.97Q7.41 1.92 6.4 2.16Q5.39 2.4 4.59 2.99Q2.88 4.27 2.27 6.35Q1.65 8.43 2.53 10.35Q3.41 12.27 5.23 13.28Q6.08 13.81 7.09 13.97Q8.11 14.13 9.12 13.92ZM7.89 7.52 10.29 5.01 10.99 5.71 8.59 8.21 10.99 10.72 10.29 11.41 7.89 8.91 5.49 11.41 4.8 10.72 7.2 8.21 4.8 5.71 5.49 5.01Z"/></svg>
<div class="t" style="left:104.90px;top:604.74px;font-size:12px;color:#ccc;">0</div>
<svg class="ic" style="left:115.10px;top:608.10px;width:13.80px;height:13.80px;" viewBox="0 0 16 16"><path fill="#ccc" d="M7.57 1.01H8.43L14.99 13.28L14.56 13.97H1.44L1.01 13.28ZM8 2.29 2.29 13.01H13.71ZM8.64 12V10.99H7.36V12ZM7.36 9.97V5.97H8.64V9.97Z"/></svg>
<div class="t" style="left:132.20px;top:604.74px;font-size:12px;color:#ccc;">0</div>
<svg class="ic" style="left:155.50px;top:608.10px;width:13.80px;height:13.80px;" viewBox="0 0 16 16"><path fill="#ccc" d="M2.99 5.6Q2.99 4.48 3.41 3.47Q3.84 2.45 4.64 1.71L3.89 1.01Q2.99 1.92 2.48 3.09Q1.97 4.27 1.97 5.57Q1.97 6.88 2.48 8.05Q2.99 9.23 3.89 10.13L4.64 9.44Q3.84 8.69 3.41 7.68Q2.99 6.67 2.99 5.6ZM4.05 5.6Q4.05 6.45 4.4 7.28Q4.75 8.11 5.39 8.75L6.08 8.05Q5.6 7.57 5.33 6.93Q5.07 6.29 5.07 5.6Q5.07 4.91 5.33 4.27Q5.6 3.63 6.08 3.15L5.39 2.4Q4.75 3.04 4.4 3.87Q4.05 4.69 4.05 5.6ZM11.73 8.8 10.99 8.05Q11.52 7.57 11.79 6.93Q12.05 6.29 12.05 5.6Q12.05 4.91 11.79 4.27Q11.52 3.63 10.99 3.15L11.73 2.45Q12.32 3.09 12.67 3.92Q13.01 4.75 13.01 5.63Q13.01 6.51 12.67 7.33Q12.32 8.16 11.73 8.8ZM13.07 1.01 12.37 1.71Q13.12 2.45 13.55 3.47Q13.97 4.48 13.97 5.57Q13.97 6.67 13.55 7.68Q13.12 8.69 12.37 9.44L13.07 10.13Q13.97 9.23 14.48 8.05Q14.99 6.88 14.99 5.57Q14.99 4.27 14.48 3.09Q13.97 1.92 13.07 1.01ZM9.97 5.44Q10.03 5.97 9.76 6.4L9.49 6.61L12.91 14.35L12 14.77L11.25 13.01H5.71L4.91 14.77L4 14.35L7.41 6.61Q7.15 6.29 7.04 5.87Q6.93 5.44 7.12 5.01Q7.31 4.59 7.65 4.35Q8 4.11 8.4 4.08Q8.8 4.05 9.15 4.21Q9.49 4.37 9.73 4.69Q9.97 5.01 9.97 5.44ZM8.37 5.07Q8.27 5.12 8.16 5.23Q8.05 5.33 8.03 5.47Q8 5.6 8.05 5.73Q8.11 5.87 8.24 5.95Q8.37 6.03 8.53 6.03Q8.69 6.03 8.85 5.89Q9.01 5.76 9.01 5.57Q9.01 5.39 8.91 5.28Q8.8 5.17 8.67 5.12Q8.53 5.07 8.37 5.07ZM8.64 7.15H8.37L7.47 9.07H9.49ZM10.83 12.05 9.92 10.08H7.04L6.19 12.05Z"/></svg>
<div class="t" style="left:172.60px;top:604.74px;font-size:12px;color:#ccc;">0</div>
<div class="abs" style="left:537.7px;top:604.8px;width:33px;height:20.8px;background:#35373b"></div>
<svg class="ic" style="left:547.10px;top:608.10px;width:13.80px;height:13.80px;" viewBox="0 0 16 16"><path fill="#ccc" d="M12.05 6.13Q12.11 7.2 11.76 8.21Q11.41 9.23 10.77 10.08L15.04 14.29L14.29 15.04L10.08 10.77Q8.59 12 6.67 12.05Q4.75 12.11 3.23 10.96Q1.71 9.81 1.2 7.97Q0.69 6.13 1.44 4.37Q2.19 2.61 3.87 1.68Q5.55 0.75 7.44 1.07Q9.33 1.39 10.61 2.8Q11.89 4.21 12.05 6.13ZM6.56 11.04Q7.47 11.04 8.29 10.69Q9.12 10.35 9.76 9.71L9.71 9.76Q10.35 9.12 10.72 8.29Q11.09 7.47 11.09 6.56Q11.09 5.33 10.48 4.29Q9.87 3.25 8.83 2.64Q7.79 2.03 6.56 2.03Q5.33 2.03 4.32 2.64Q3.31 3.25 2.69 4.29Q2.08 5.33 2.08 6.53Q2.08 7.73 2.69 8.77Q3.31 9.81 4.32 10.43Q5.33 11.04 6.56 11.04ZM9.01 7.04V6.03H7.04V4.05H6.03V6.03H4V7.04H6.03V9.01H7.04V7.04Z"/></svg>
<div class="t" style="left:578.80px;top:604.74px;font-size:12px;color:#ccc;letter-spacing:0.2px;">Ln 8, Col 1</div>
<div class="t" style="left:655.40px;top:604.74px;font-size:12px;color:#ccc;letter-spacing:0.02px;">Tab Size: 4</div>
<div class="t" style="left:731.50px;top:604.74px;font-size:12px;color:#ccc;letter-spacing:0.2px;">UTF-8</div>
<div class="t" style="left:783.10px;top:604.74px;font-size:12px;color:#ccc;">LF</div>
<svg class="ic" style="left:810.50px;top:608.10px;width:13.80px;height:13.80px;" viewBox="0 0 16 16"><path fill="#ccc" d="M6.03 2.99H5.92Q5.6 2.99 5.33 3.09Q5.07 3.2 4.88 3.41Q4.69 3.63 4.59 3.89Q4.48 4.16 4.48 4.48V5.81Q4.48 6.13 4.43 6.45Q4.37 6.77 4.27 7.07Q4.16 7.36 3.97 7.57Q3.79 7.79 3.52 8Q3.79 8.21 3.97 8.43Q4.16 8.64 4.27 8.93Q4.37 9.23 4.43 9.55Q4.48 9.87 4.48 10.19V11.52Q4.48 11.84 4.59 12.11Q4.69 12.37 4.88 12.59Q5.07 12.8 5.33 12.91Q5.6 13.01 5.92 13.01H6.03V13.97H5.92Q5.44 13.97 5.01 13.81Q4.59 13.65 4.24 13.31Q3.89 12.96 3.73 12.53Q3.57 12.11 3.52 11.73V11.68Q3.47 11.25 3.52 10.83V9.97Q3.52 9.65 3.41 9.39Q3.31 9.12 3.09 8.96V8.91Q2.93 8.75 2.67 8.64Q2.4 8.48 2.08 8.48H2.03V7.52H2.08Q2.4 7.52 2.67 7.39Q2.93 7.25 3.12 7.07Q3.31 6.88 3.41 6.61Q3.52 6.35 3.52 6.03V5.17Q3.47 4.75 3.52 4.32Q3.57 3.89 3.73 3.47Q3.89 3.04 4.24 2.69Q4.59 2.35 5.01 2.16Q5.44 1.97 5.92 1.97H6.03ZM13.92 8.48H14.03V7.52H13.92Q13.6 7.52 13.33 7.36Q13.07 7.25 12.91 7.09V7.04Q12.69 6.88 12.59 6.61Q12.48 6.35 12.48 6.03V5.17Q12.53 4.75 12.48 4.32V4.27Q12.43 3.89 12.27 3.47Q12.11 3.04 11.76 2.69Q11.41 2.35 10.99 2.16Q10.56 1.97 10.08 1.97H10.03V2.99H10.08Q10.4 2.99 10.67 3.09Q10.93 3.2 11.12 3.41Q11.31 3.63 11.41 3.89Q11.52 4.16 11.52 4.48V5.81Q11.52 6.13 11.57 6.45Q11.63 6.77 11.73 7.07Q11.84 7.36 12.03 7.57Q12.21 7.79 12.48 8H12.43Q13.23 8.11 13.92 8.48ZM12 9.01Q11.09 9.01 10.35 9.52Q9.6 10.03 9.25 10.85Q8.91 11.68 9.07 12.59Q9.23 13.49 9.87 14.13Q10.51 14.77 11.41 14.93Q12.32 15.09 13.15 14.75Q13.97 14.4 14.48 13.65Q14.99 12.91 14.99 12Q14.99 10.77 14.11 9.89Q13.23 9.01 12 9.01Z"/></svg>
<div class="t" style="left:829.90px;top:604.74px;font-size:12px;color:#ccc;">Go</div>
<div class="t" style="left:860.40px;top:604.74px;font-size:12px;color:#ccc;letter-spacing:0.2px;">1.22.4</div>
<svg class="ic" style="left:899.3px;top:608.4px;width:8.2px;height:12.4px" viewBox="0 0 8.2 12.4"><path d="M3.4 .7L7.3 1.1L5 4.5L7.8 4.7L1.1 11.6L2.7 6.7L.4 6.4Z" fill="none" stroke="#ccc" stroke-width=".95" stroke-linejoin="round"/></svg>
<svg class="ic" style="left:925.30px;top:608.00px;width:13.80px;height:13.80px;" viewBox="0 0 16 16"><path fill="#ccc" d="M13.01 7.89Q12.53 8 12 8V8.21Q12 9.6 12.43 10.93L12.8 12H3.15L3.52 10.88Q4 9.55 4 8.21V6.03Q4 5.17 4.35 4.37Q4.69 3.57 5.31 3.01Q5.92 2.45 6.75 2.19Q7.57 1.92 8.37 2.03H8.53Q8.8 1.55 9.17 1.17Q8.85 1.07 8.48 1.01Q7.41 0.91 6.4 1.25Q5.39 1.6 4.61 2.32Q3.84 3.04 3.41 4Q2.99 4.96 2.99 6.03V8.21Q2.99 9.39 2.61 10.56L2.03 12.32L2.45 13.01H5.97Q5.97 13.81 6.56 14.4Q7.15 14.99 7.97 14.99Q8.8 14.99 9.39 14.4Q9.97 13.81 9.97 13.01H13.49L13.97 12.32L13.39 10.56Q13.01 9.39 13.01 8.21ZM8 14.03Q8.37 14.03 8.69 13.73Q9.01 13.44 8.96 13.01H6.99Q6.99 13.44 7.28 13.73Q7.57 14.03 8 14.03ZM12 6.99Q13.23 6.99 14.11 6.11Q14.99 5.23 14.99 4Q14.99 2.77 14.11 1.89Q13.23 1.01 12 1.01Q10.77 1.01 9.89 1.89Q9.01 2.77 9.01 4Q9.01 5.23 9.89 6.11Q10.77 6.99 12 6.99Z"/></svg>
<div class="abs" style="left:45px;top:30.2px;width:909.7px;height:595.4px;border-radius:8.5px;box-shadow:inset 0 0 0 1px rgba(255,255,255,.17);pointer-events:none"></div>
</div></body></html>
